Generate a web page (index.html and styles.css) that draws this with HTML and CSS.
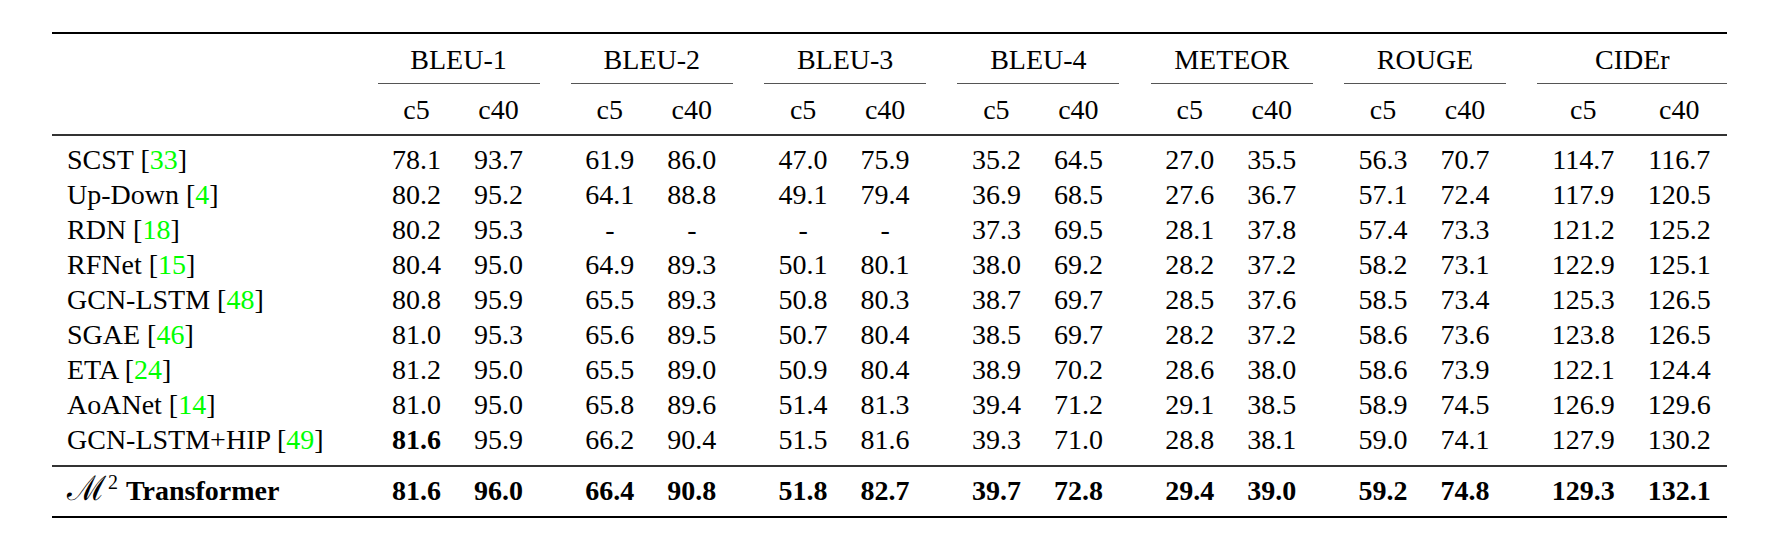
FILE: index.html
```html
<!DOCTYPE html>
<html lang="en">
<head>
    <meta charset="UTF-8">
    <title>Captioning results</title>
    <link rel="stylesheet" href="styles.css">
</head>
<body>

    <table class="results">
        <colgroup>
            <col class="col-name">
            <col class="col-num"><col class="col-num"><col class="col-gap">
            <col class="col-num"><col class="col-num"><col class="col-gap">
            <col class="col-num"><col class="col-num"><col class="col-gap">
            <col class="col-num"><col class="col-num"><col class="col-gap">
            <col class="col-num"><col class="col-num"><col class="col-gap">
            <col class="col-num"><col class="col-num"><col class="col-gap">
            <col class="col-wide"><col class="col-wide">
        </colgroup>
        <thead>
            <tr class="metrics">
                <th></th>
                <th colspan="2"><span>BLEU-1</span></th><th></th>
                <th colspan="2"><span>BLEU-2</span></th><th></th>
                <th colspan="2"><span>BLEU-3</span></th><th></th>
                <th colspan="2"><span>BLEU-4</span></th><th></th>
                <th colspan="2"><span>METEOR</span></th><th></th>
                <th colspan="2"><span>ROUGE</span></th><th></th>
                <th colspan="2"><span>CIDEr</span></th>
            </tr>
            <tr class="splits">
                <th></th>
                <th>c5</th><th>c40</th><th></th>
                <th>c5</th><th>c40</th><th></th>
                <th>c5</th><th>c40</th><th></th>
                <th>c5</th><th>c40</th><th></th>
                <th>c5</th><th>c40</th><th></th>
                <th>c5</th><th>c40</th><th></th>
                <th>c5</th><th>c40</th>
            </tr>
        </thead>
        <tbody>
            <tr>
                <td>SCST [<span class="cite">33</span>]</td>
                <td>78.1</td><td>93.7</td><td></td>
                <td>61.9</td><td>86.0</td><td></td>
                <td>47.0</td><td>75.9</td><td></td>
                <td>35.2</td><td>64.5</td><td></td>
                <td>27.0</td><td>35.5</td><td></td>
                <td>56.3</td><td>70.7</td><td></td>
                <td>114.7</td><td>116.7</td>
            </tr>
            <tr>
                <td>Up-Down [<span class="cite">4</span>]</td>
                <td>80.2</td><td>95.2</td><td></td>
                <td>64.1</td><td>88.8</td><td></td>
                <td>49.1</td><td>79.4</td><td></td>
                <td>36.9</td><td>68.5</td><td></td>
                <td>27.6</td><td>36.7</td><td></td>
                <td>57.1</td><td>72.4</td><td></td>
                <td>117.9</td><td>120.5</td>
            </tr>
            <tr>
                <td>RDN [<span class="cite">18</span>]</td>
                <td>80.2</td><td>95.3</td><td></td>
                <td>-</td><td>-</td><td></td>
                <td>-</td><td>-</td><td></td>
                <td>37.3</td><td>69.5</td><td></td>
                <td>28.1</td><td>37.8</td><td></td>
                <td>57.4</td><td>73.3</td><td></td>
                <td>121.2</td><td>125.2</td>
            </tr>
            <tr>
                <td>RFNet [<span class="cite">15</span>]</td>
                <td>80.4</td><td>95.0</td><td></td>
                <td>64.9</td><td>89.3</td><td></td>
                <td>50.1</td><td>80.1</td><td></td>
                <td>38.0</td><td>69.2</td><td></td>
                <td>28.2</td><td>37.2</td><td></td>
                <td>58.2</td><td>73.1</td><td></td>
                <td>122.9</td><td>125.1</td>
            </tr>
            <tr>
                <td>GCN-LSTM [<span class="cite">48</span>]</td>
                <td>80.8</td><td>95.9</td><td></td>
                <td>65.5</td><td>89.3</td><td></td>
                <td>50.8</td><td>80.3</td><td></td>
                <td>38.7</td><td>69.7</td><td></td>
                <td>28.5</td><td>37.6</td><td></td>
                <td>58.5</td><td>73.4</td><td></td>
                <td>125.3</td><td>126.5</td>
            </tr>
            <tr>
                <td>SGAE [<span class="cite">46</span>]</td>
                <td>81.0</td><td>95.3</td><td></td>
                <td>65.6</td><td>89.5</td><td></td>
                <td>50.7</td><td>80.4</td><td></td>
                <td>38.5</td><td>69.7</td><td></td>
                <td>28.2</td><td>37.2</td><td></td>
                <td>58.6</td><td>73.6</td><td></td>
                <td>123.8</td><td>126.5</td>
            </tr>
            <tr>
                <td>ETA [<span class="cite">24</span>]</td>
                <td>81.2</td><td>95.0</td><td></td>
                <td>65.5</td><td>89.0</td><td></td>
                <td>50.9</td><td>80.4</td><td></td>
                <td>38.9</td><td>70.2</td><td></td>
                <td>28.6</td><td>38.0</td><td></td>
                <td>58.6</td><td>73.9</td><td></td>
                <td>122.1</td><td>124.4</td>
            </tr>
            <tr>
                <td>AoANet [<span class="cite">14</span>]</td>
                <td>81.0</td><td>95.0</td><td></td>
                <td>65.8</td><td>89.6</td><td></td>
                <td>51.4</td><td>81.3</td><td></td>
                <td>39.4</td><td>71.2</td><td></td>
                <td>29.1</td><td>38.5</td><td></td>
                <td>58.9</td><td>74.5</td><td></td>
                <td>126.9</td><td>129.6</td>
            </tr>
            <tr>
                <td>GCN-LSTM+HIP [<span class="cite">49</span>]</td>
                <td class="best">81.6</td><td>95.9</td><td></td>
                <td>66.2</td><td>90.4</td><td></td>
                <td>51.5</td><td>81.6</td><td></td>
                <td>39.3</td><td>71.0</td><td></td>
                <td>28.8</td><td>38.1</td><td></td>
                <td>59.0</td><td>74.1</td><td></td>
                <td>127.9</td><td>130.2</td>
            </tr>
        </tbody>
        <tbody class="ours">
            <tr>
                <td><span class="mcal">ℳ</span><sup>2</sup>Transformer</td>
                <td>81.6</td><td>96.0</td><td></td>
                <td>66.4</td><td>90.8</td><td></td>
                <td>51.8</td><td>82.7</td><td></td>
                <td>39.7</td><td>72.8</td><td></td>
                <td>29.4</td><td>39.0</td><td></td>
                <td>59.2</td><td>74.8</td><td></td>
                <td>129.3</td><td>132.1</td>
            </tr>
        </tbody>
    </table>

</body>
</html>
```

FILE: styles.css
```css
body {
    margin: 0;
    background-color: #fff;
    color: #000;
    font-family: "Liberation Serif", "Times New Roman", serif;
}

.results {
    margin: 32px 0 0 52px;
    width: 1675.3px;
    table-layout: fixed;
    border-collapse: separate;
    border-spacing: 0;
    font-size: 28px;
    line-height: 35px;
}

.col-name { width: 323.5px; }
.col-num  { width: 82px; }
.col-gap  { width: 29.3px; }
.col-wide { width: 96px; }

.results th,
.results td {
    padding: 0;
    text-align: center;
    vertical-align: top;
    white-space: nowrap;
    font-weight: normal;
}

.results td:first-child {
    text-align: left;
    padding-left: 15px;
}

/* toprule + metric names with their cmidrules */
.metrics th {
    border-top: 2px solid #000;
    padding-top: 8px;
}

.metrics span {
    display: block;
    margin-left: 2px;
    padding-bottom: 6px;
    border-bottom: 1px solid #555;
}

.splits th {
    padding-top: 8px;
    padding-bottom: 7px;
    border-bottom: 2px solid #333;
}

tbody tr:first-child td {
    padding-top: 6px;
}

tbody tr:last-child td {
    padding-bottom: 8px;
}

.cite {
    color: #00ff00;
}

.best {
    font-weight: bold !important;
}

.ours td {
    border-top: 2px solid #333;
    border-bottom: 2px solid #000;
    font-weight: bold;
}

.mcal {
    font-family: "DejaVu Serif", serif;
    font-weight: normal;
    font-size: 34px;
    line-height: 0;
}

.ours sup {
    font-weight: normal;
    font-size: 20px;
    line-height: 0;
    vertical-align: 11px;
    margin: 0 8px 0 2px;
}
```
